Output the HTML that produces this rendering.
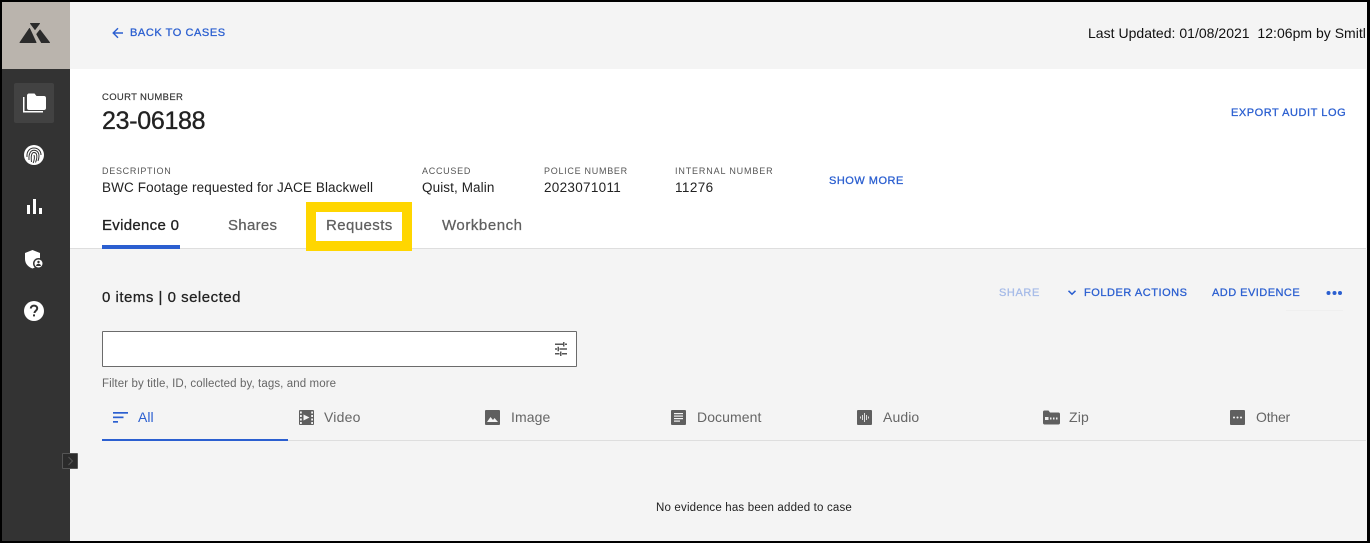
<!DOCTYPE html>
<html><head><meta charset="utf-8"><style>
html,body{margin:0;padding:0;background:#000}
#p{position:relative;width:1370px;height:543px;overflow:hidden;background:#000;font-family:"Liberation Sans",sans-serif}
#p div,#p svg{position:absolute}
.t{white-space:nowrap;line-height:1}
.b{color:#2b5fd0;font-size:11px;-webkit-text-stroke:.3px currentColor}
.l{color:#555;font-size:9px;letter-spacing:.72px}
.v{color:#222;font-size:13.5px}
.g{color:#5f5f5f;font-size:15px;-webkit-text-stroke:.25px currentColor}
.c{color:#666;font-size:14px}
</style></head><body><div id="p">
<div style="left:2px;top:2px;width:1365px;height:539px;background:#f4f4f4"></div>
<div style="left:70px;top:69px;width:1296px;height:180px;background:#fff"></div>
<div style="left:70px;top:248px;width:1296px;height:1px;background:#dedede"></div>
<div style="left:2px;top:2px;width:68px;height:539px;background:#333"></div>
<div style="left:2px;top:2px;width:68px;height:67px;background:#bab4ad"></div>
<svg style="left:19px;top:23px" width="32" height="21" viewBox="0 0 32 21" fill="#2b2b2b" stroke="#2b2b2b" stroke-width="1" stroke-linejoin="round"><path d="M11.500 .5h9l-4.500 6z"/><path d="M10.500 5.500L1 19.500h16z"/><path d="M21 7L30.500 19.500H22.500L17.800 11.200z"/></svg>
<div style="left:14px;top:83px;width:40px;height:40px;background:#424242;border-radius:2px"></div>
<svg style="left:22px;top:93px" width="25" height="21" viewBox="0 0 25 21"><path d="M1 4v15.500h20V18H2.500V4z" fill="#fff"/><path d="M5 2.500C5 1.500 5.800 .5 7 .5h5.500l2 2.500H22c1.200 0 2 .8 2 2V15c0 1.200-.8 2-2 2H7c-1.200 0-2-.8-2-2z" fill="#fff"/></svg>
<svg style="left:24px;top:145px" width="20" height="20" viewBox="0 0 20 20"><circle cx="10" cy="10" r="10" fill="#fff"/><g fill="none" stroke="#333" stroke-width="1"><path d="M3 12C2.500 6 6 3 10 3s7 3 7 7"/><path d="M5 15C4.500 8 7 5.200 10 5.200S15 7.500 15 11c0 2-.5 3.500-1 5"/><path d="M7.500 17C6.800 11 7.500 7.500 10 7.500s3 2.500 2.800 5c-.1 2-.7 3.500-1.300 5"/><path d="M10 10c.8 2 .3 5-.8 8"/></g></svg>
<svg style="left:27px;top:199px" width="15" height="15" viewBox="0 0 15 15" fill="#fff"><rect x="0" y="6" width="3" height="9"/><rect x="6" y="0" width="3" height="15"/><rect x="12" y="9" width="3" height="6"/></svg>
<svg style="left:25px;top:250px" width="19" height="19" viewBox="0 0 19 19"><path d="M7.500 0L15 3v6c0 4.500-3 8-7.500 9.500C3 17 0 13.500 0 9V3z" fill="#fff"/><circle cx="13.500" cy="13.500" r="5.500" fill="#333"/><circle cx="13.500" cy="13.500" r="4" fill="#fff"/><circle cx="13.500" cy="12" r="1.200" fill="#333"/><path d="M11 16c.3-1.500 1.200-2.200 2.500-2.200s2.200.7 2.500 2.200z" fill="#333"/></svg>
<svg style="left:24px;top:301px" width="20" height="20" viewBox="0 0 20 20"><circle cx="10" cy="10" r="10" fill="#fff"/><path d="M6.800 7.500C6.900 5.700 8.200 4.600 10 4.600c1.900 0 3.200 1.200 3.200 2.800 0 2.300-2.700 2.300-2.700 4.600" fill="none" stroke="#333" stroke-width="2"/><rect x="9" y="13.400" width="2" height="2" fill="#333"/></svg>
<div style="left:62px;top:453px;width:16px;height:16px;box-sizing:border-box;background:#2b2b2b;border:1px solid #555;border-radius:1px"></div>
<svg style="left:67px;top:456px" width="7" height="10" viewBox="0 0 7 10"><path d="M1.500 1l4 4-4 4" fill="none" stroke="#555" stroke-width="1"/></svg>

<svg style="left:112px;top:27px" width="12" height="12" viewBox="0 0 12 12"><path d="M11 6H1.500M6 1.200L1.200 6 6 10.800" fill="none" stroke="#2b5fd0" stroke-width="1.400"/></svg>
<div class="t b" style="left:130px;top:28px;letter-spacing:.57px">BACK TO CASES</div>
<div class="t" style="left:1088px;top:26px;font-size:14px;color:#111;letter-spacing:.02px;white-space:pre">Last Updated: 01/08/2021  12:06pm by Smitl</div>
<div style="left:1367px;top:0;width:3px;height:543px;background:#000"></div>
<div class="t l" style="left:102px;top:93px;color:#333;font-size:9.5px;letter-spacing:.33px;-webkit-text-stroke:.15px currentColor">COURT NUMBER</div>
<div class="t" style="left:102px;top:109px;font-size:25px;color:#222;letter-spacing:-.3px;-webkit-text-stroke:.35px currentColor">23-06188</div>
<div class="t b" style="left:1231px;top:108px;letter-spacing:.55px">EXPORT AUDIT LOG</div>

<div class="t l" style="left:102px;top:167px">DESCRIPTION</div>
<div class="t v" style="left:102px;top:181px;letter-spacing:.12px">BWC Footage requested for JACE Blackwell</div>
<div class="t l" style="left:422px;top:167px">ACCUSED</div>
<div class="t v" style="left:422px;top:181px;letter-spacing:.1px">Quist, Malin</div>
<div class="t l" style="left:544px;top:167px">POLICE NUMBER</div>
<div class="t v" style="left:544px;top:181px;letter-spacing:.3px">2023071011</div>
<div class="t l" style="left:675px;top:167px;letter-spacing:.85px">INTERNAL NUMBER</div>
<div class="t v" style="left:675px;top:181px;letter-spacing:.4px">11276</div>
<div class="t b" style="left:829px;top:176px;letter-spacing:.5px">SHOW MORE</div>

<div class="t" style="left:102px;top:218px;font-size:15px;color:#222;letter-spacing:.3px;-webkit-text-stroke:.3px currentColor">Evidence 0</div>
<div style="left:102px;top:245px;width:78px;height:4px;background:#2b5fd0"></div>
<div class="t g" style="left:228px;top:218px;letter-spacing:.3px">Shares</div>
<div style="left:306px;top:202px;width:106px;height:49px;box-sizing:border-box;border:10px solid #ffd600;background:#fff"></div>
<div class="t g" style="left:326px;top:218px;letter-spacing:.42px">Requests</div>
<div class="t g" style="left:442px;top:218px;letter-spacing:.55px">Workbench</div>

<div class="t" style="left:102px;top:290px;font-size:15px;color:#222;letter-spacing:.5px;-webkit-text-stroke:.25px currentColor">0 items | 0 selected</div>
<div class="t b" style="left:999px;top:288px;color:#a6bbe8;letter-spacing:.6px">SHARE</div>
<svg style="left:1067px;top:289px" width="10" height="8" viewBox="0 0 10 8"><path d="M1.500 1.800L5 5.200l3.500-3.400" fill="none" stroke="#2b5fd0" stroke-width="1.500"/></svg>
<div class="t b" style="left:1084px;top:288px;letter-spacing:.54px">FOLDER ACTIONS</div>
<div class="t b" style="left:1212px;top:288px;letter-spacing:.47px">ADD EVIDENCE</div>
<svg style="left:1326px;top:290px" width="17" height="6" viewBox="0 0 17 6" fill="#2b5fd0"><circle cx="2.500" cy="3" r="2"/><circle cx="8.500" cy="3" r="2"/><circle cx="14" cy="3" r="2"/></svg>
<div style="left:1286px;top:310px;width:57px;height:1px;background:#efefef"></div>

<div style="left:102px;top:331px;width:473px;height:34px;background:#fff;border:1px solid #6b6b6b;border-radius:1px"></div>
<svg style="left:554px;top:342px" width="14" height="14" viewBox="0 0 14 14" fill="#555"><path d="M1 1.500h8v1.500H1zM9 0h1.500v4.500H9zM11 1.500h2V3h-2zM1 6.200h2v1.500H1zM3.500 4.800H5v4.400H3.500zM5.500 6.200H13v1.500H5.500zM1 11h4.500v1.500H1zM6 9.500h1.500V14H6zM8 11h5v1.500H8z"/></svg>
<div class="t" style="left:102px;top:379px;font-size:11.5px;color:#666;letter-spacing:.1px">Filter by title, ID, collected by, tags, and more</div>

<div style="left:102px;top:440px;width:1264px;height:1px;background:#dedede"></div>
<div style="left:102px;top:439px;width:186px;height:2px;background:#2b5fd0"></div>
<svg style="left:113px;top:412px" width="15" height="11" viewBox="0 0 15 11" fill="#2b5fd0"><rect y="0" width="15" height="1.700"/><rect y="4.500" width="10.500" height="1.700"/><rect y="9" width="5" height="1.700"/></svg>
<div class="t c" style="left:138px;top:410px;color:#2b5fd0">All</div>
<svg style="left:299px;top:410px" width="15" height="15" viewBox="0 0 15 15"><rect width="15" height="15" rx="1" fill="#5f5f5f"/><g fill="#f4f4f4"><rect x="1" y="1.500" width="1.800" height="2"/><rect x="1" y="5" width="1.800" height="2"/><rect x="1" y="8.500" width="1.800" height="2"/><rect x="1" y="12" width="1.800" height="2"/><rect x="12.200" y="1.500" width="1.800" height="2"/><rect x="12.200" y="5" width="1.800" height="2"/><rect x="12.200" y="8.500" width="1.800" height="2"/><rect x="12.200" y="12" width="1.800" height="2"/><path d="M4.500 4.500l6 3-6 3z"/></g></svg>
<div class="t c" style="left:324px;top:410px;letter-spacing:.2px">Video</div>
<svg style="left:485px;top:410px" width="15" height="15" viewBox="0 0 15 15"><rect width="15" height="15" rx="1" fill="#5f5f5f"/><path d="M2 12l3.500-5 2.500 3 1.500-2 3.500 4z" fill="#f4f4f4"/></svg>
<div class="t c" style="left:511px;top:410px;letter-spacing:.1px">Image</div>
<svg style="left:671px;top:410px" width="15" height="15" viewBox="0 0 15 15"><rect width="15" height="15" rx="1" fill="#5f5f5f"/><g fill="#f4f4f4"><rect x="3" y="3" width="9" height="1.200"/><rect x="3" y="5.500" width="9" height="1.200"/><rect x="3" y="8" width="9" height="1.200"/><rect x="3" y="10.500" width="6" height="1.200"/></g></svg>
<div class="t c" style="left:697px;top:410px;letter-spacing:.08px">Document</div>
<svg style="left:857px;top:410px" width="15" height="15" viewBox="0 0 15 15"><rect width="15" height="15" rx="1" fill="#5f5f5f"/><g fill="#ddd"><rect x="3" y="6.500" width="1" height="2"/><rect x="5" y="5" width="1" height="5"/><rect x="7" y="3" width="1" height="9"/><rect x="9" y="5" width="1" height="5"/><rect x="11" y="6.500" width="1" height="2"/></g></svg>
<div class="t c" style="left:883px;top:410px;letter-spacing:.1px">Audio</div>
<svg style="left:1043px;top:410px" width="17" height="15" viewBox="0 0 17 15"><path d="M0 2c0-.8.5-1.500 1.300-1.500h4.200l1.500 2h8.500c.8 0 1.500.7 1.500 1.500v9c0 .8-.7 1.500-1.500 1.500H1.500C.7 14.500 0 13.800 0 13z" fill="#5f5f5f"/><g fill="#eee"><rect x="2" y="7" width="3.500" height="3"/><rect x="7" y="7.500" width="1.500" height="2"/><rect x="10" y="7.500" width="1.500" height="2"/><rect x="13" y="7.500" width="1.500" height="2"/></g></svg>
<div class="t c" style="left:1069px;top:410px;letter-spacing:.2px">Zip</div>
<svg style="left:1230px;top:410px" width="15" height="15" viewBox="0 0 15 15"><rect width="15" height="15" rx="1" fill="#5f5f5f"/><g fill="#f4f4f4"><circle cx="4" cy="7.500" r="1"/><circle cx="7.500" cy="7.500" r="1"/><circle cx="11" cy="7.500" r="1"/></g></svg>
<div class="t c" style="left:1256px;top:410px;letter-spacing:-.2px">Other</div>

<div class="t" style="left:656px;top:503px;font-size:11.5px;color:#222;letter-spacing:.18px">No evidence has been added to case</div>
</div></body></html>
